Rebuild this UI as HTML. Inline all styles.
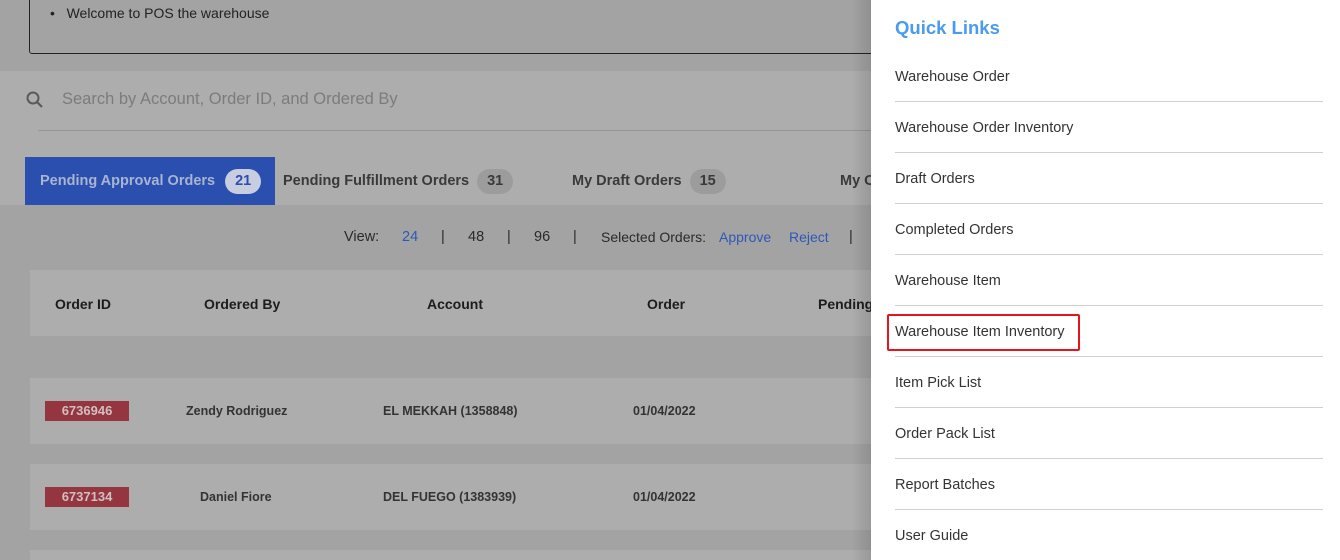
<!DOCTYPE html>
<html style="width:1340px;height:560px;overflow:hidden"><head><style>
*{margin:0;padding:0;box-sizing:border-box}
body{width:1340px;height:560px;overflow:hidden;position:relative;background:#a3a3a3;font-family:"Liberation Sans",sans-serif;color:#1e1e1e}
.a{position:absolute;white-space:nowrap}
.band{position:absolute;left:0;width:871px;background:#adadad}
.cell{font-size:14px;font-weight:bold;color:#1c1c1c}
.row{position:absolute;left:30px;width:841px;height:66px;background:#adadad}
.badge{position:absolute;left:15px;top:23px;width:84px;height:20px;background:#943540;color:#d0c0c0;font-size:13px;font-weight:bold;text-align:center;line-height:20px}
.rt{position:absolute;top:26px;font-size:12.5px;font-weight:bold;color:#333}
.pill{display:inline-block;background:#9c9c9c;border-radius:13px;padding:0 10px;height:25px;line-height:25px;margin-left:8px;color:#3a3a3a}
.panel{position:absolute;left:871px;top:0;width:469px;height:560px;background:#fff}
.lk{position:absolute;left:24px;font-size:14.5px;color:#333}
.dv{position:absolute;left:24px;width:428px;height:1px;background:#d0d0d0}
.tb{position:absolute;top:229px;font-size:14.5px;color:#2a2a2a;white-space:nowrap}
.bl{color:#2f57b8}
</style></head><body>
<div class="a" style="left:29px;top:-5px;width:900px;height:59px;border:1px solid #222;border-radius:3px"></div>
<div class="a" style="left:50px;top:5px;font-size:14px;color:#222">•&nbsp;&nbsp;&nbsp;Welcome to POS the warehouse</div>
<div class="band" style="top:71px;height:134px"></div>
<svg class="a" style="left:25px;top:90px" width="20" height="20" viewBox="0 0 20 20"><circle cx="8" cy="8" r="5.5" fill="none" stroke="#5a5a5a" stroke-width="2"/><line x1="12" y1="12" x2="17" y2="17" stroke="#5a5a5a" stroke-width="2.2"/></svg>
<div class="a" style="left:62px;top:90px;font-size:16.5px;color:#7c7c7c">Search by Account, Order ID, and Ordered By</div>
<div class="a" style="left:38px;top:130px;width:833px;height:1px;background:#969696"></div>
<div class="a" style="left:25px;top:157px;width:250px;height:48px;background:#2a4fae"></div>
<div class="a cell" style="left:40px;top:169px;font-size:14.5px;color:#a8b4d0;line-height:25px">Pending Approval Orders<span class="pill" style="background:#c8cde0;color:#2a4fae;margin-left:10px">21</span></div>
<div class="a cell" style="left:283px;top:169px;font-size:14.5px;color:#3a3a3a;line-height:25px">Pending Fulfillment Orders<span class="pill">31</span></div>
<div class="a cell" style="left:572px;top:169px;font-size:14.5px;color:#3a3a3a;line-height:25px">My Draft Orders<span class="pill">15</span></div>
<div class="a cell" style="left:840px;top:169px;font-size:14.5px;color:#3a3a3a;line-height:25px">My O</div>
<span class="tb" style="left:344px">View:</span>
<span class="tb bl" style="left:402px">24</span>
<span class="tb" style="left:441px">|</span>
<span class="tb" style="left:468px">48</span>
<span class="tb" style="left:507px">|</span>
<span class="tb" style="left:534px">96</span>
<span class="tb" style="left:573px">|</span>
<span class="tb" style="left:601px;font-size:14px">Selected Orders:</span>
<span class="tb bl" style="left:719px;font-size:14px">Approve</span>
<span class="tb bl" style="left:789px;font-size:14px">Reject</span>
<span class="tb" style="left:849px">|</span>
<div class="row" style="top:270px"></div>
<div class="a cell" style="left:55px;top:296px">Order ID</div>
<div class="a cell" style="left:204px;top:296px">Ordered By</div>
<div class="a cell" style="left:427px;top:296px">Account</div>
<div class="a cell" style="left:647px;top:296px">Order</div>
<div class="a cell" style="left:818px;top:296px">Pending</div>
<div class="row" style="top:378px"><div class="badge">6736946</div><div class="rt" style="left:156px">Zendy Rodriguez</div><div class="rt" style="left:353px">EL MEKKAH (1358848)</div><div class="rt" style="left:603px">01/04/2022</div></div>
<div class="row" style="top:464px"><div class="badge">6737134</div><div class="rt" style="left:170px">Daniel Fiore</div><div class="rt" style="left:353px">DEL FUEGO (1383939)</div><div class="rt" style="left:603px">01/04/2022</div></div>
<div class="row" style="top:550px;height:10px"></div>
<div class="a" style="left:851px;top:0;width:20px;height:560px;background:linear-gradient(to right,rgba(0,0,0,0),rgba(0,0,0,0.12))"></div>
<div class="panel">
<div class="a" style="left:24px;top:17px;font-size:18.5px;font-weight:bold;color:#4a9af0">Quick Links</div>
<div class="lk" style="top:69px">Warehouse Order</div><div class="dv" style="top:101px"></div>
<div class="lk" style="top:120px">Warehouse Order Inventory</div><div class="dv" style="top:152px"></div>
<div class="lk" style="top:171px">Draft Orders</div><div class="dv" style="top:203px"></div>
<div class="lk" style="top:222px">Completed Orders</div><div class="dv" style="top:254px"></div>
<div class="lk" style="top:273px">Warehouse Item</div><div class="dv" style="top:305px"></div>
<div class="lk" style="top:324px">Warehouse Item Inventory</div><div class="dv" style="top:356px"></div>
<div class="a" style="left:16px;top:314px;width:193px;height:37px;border:2px solid #e8141c;border-radius:2px"></div>
<div class="lk" style="top:375px">Item Pick List</div><div class="dv" style="top:407px"></div>
<div class="lk" style="top:426px">Order Pack List</div><div class="dv" style="top:458px"></div>
<div class="lk" style="top:477px">Report Batches</div><div class="dv" style="top:509px"></div>
<div class="lk" style="top:528px">User Guide</div>
</div>
</body></html>
